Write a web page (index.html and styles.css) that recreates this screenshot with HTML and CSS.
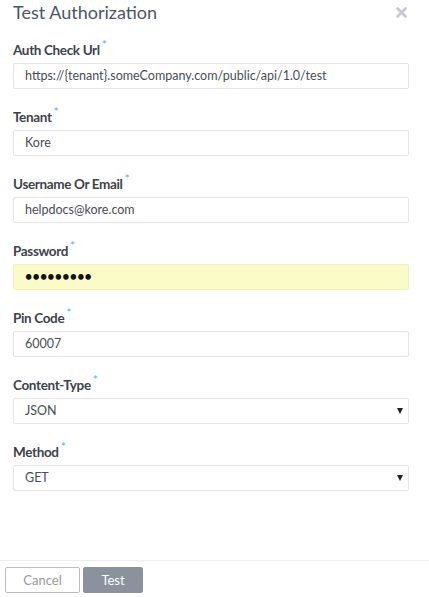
FILE: index.html
```html
<!DOCTYPE html>
<html>
<head>
<meta charset="utf-8">
<link rel="stylesheet" href="styles.css">
</head>
<body>
<div class="dialog">
  <div class="header">
    <h1 class="title">Test Authorization</h1>
    <svg class="close" width="11" height="11" viewBox="0 0 11 11"><path d="M1.5 1.5 L9.5 9.5 M9.5 1.5 L1.5 9.5" stroke="#c8c8d4" stroke-width="2.8" stroke-linecap="round"/></svg>
  </div>
  <div class="form">
    <div class="field">
      <div class="label">Auth Check Url<span class="req">*</span></div>
      <div class="control">https://{tenant}.someCompany.com/public/api/1.0/test</div>
    </div>
    <div class="field">
      <div class="label">Tenant<span class="req">*</span></div>
      <div class="control">Kore</div>
    </div>
    <div class="field">
      <div class="label">Username Or Email<span class="req">*</span></div>
      <div class="control">helpdocs@kore.com</div>
    </div>
    <div class="field">
      <div class="label">Password<span class="req">*</span></div>
      <div class="control autofill"><span class="dots">•••••••••</span></div>
    </div>
    <div class="field">
      <div class="label">Pin Code<span class="req">*</span></div>
      <div class="control">60007</div>
    </div>
    <div class="field">
      <div class="label">Content-Type<span class="req">*</span></div>
      <div class="control select">JSON<span class="caret"></span></div>
    </div>
    <div class="field">
      <div class="label">Method<span class="req">*</span></div>
      <div class="control select">GET<span class="caret"></span></div>
    </div>
  </div>
  <div class="footer">
    <button class="btn btn-cancel">Cancel</button>
    <button class="btn btn-test">Test</button>
  </div>
</div>
</body>
</html>
```
FILE: styles.css
```css
html, body {
  margin: 0;
  padding: 0;
  background: #ffffff;
}
body {
  font-family: Lato, "Open Sans", "Liberation Sans", sans-serif;
  width: 429px;
  height: 597px;
  overflow: hidden;
}
.dialog {
  display: flex;
  flex-direction: column;
  height: 597px;
}
.header {
  display: flex;
  justify-content: space-between;
  align-items: flex-start;
  padding: 0 22px 0 13px;
  height: 24px;
}
.title {
  margin: 0;
  font-size: 18px;
  line-height: 24px;
  font-weight: 400;
  color: #4b5664;
}
.close {
  margin-top: 7px;
}
.form {
  padding: 18px 20px 0 13px;
  flex: 1;
}
.field {
  margin-bottom: 20px;
}
.label {
  font-size: 13.5px;
  line-height: 16px;
  height: 16px;
  font-weight: 700;
  color: #3d424a;
  margin-bottom: 5px;
  letter-spacing: -0.35px;
}
.req {
  position: relative;
  top: -6px;
  color: #3cbfcf;
  font-size: 12px;
  margin-left: 2px;
  font-weight: 400;
}
.control {
  box-sizing: border-box;
  height: 26px;
  border: 1px solid #e4e4e4;
  border-radius: 2px;
  padding: 0 11px;
  font-size: 12.5px;
  line-height: 24px;
  color: #474d55;
  display: flex;
  align-items: center;
}
.autofill {
  background: #fafbc7;
  border-color: #f0f0c8;
}
.dots {
  font-size: 12.5px;
  font-weight: 700;
  letter-spacing: 0.2px;
  color: #111;
}
.select {
  justify-content: space-between;
}
.caret {
  width: 0;
  height: 0;
  border-left: 3px solid transparent;
  border-right: 3px solid transparent;
  border-top: 6px solid #222;
  margin-right: -6px;
}
.footer {
  border-top: 1px solid #eeeeee;
  height: 37px;
  padding: 6px 5px 0;
  box-sizing: border-box;
  display: flex;
  gap: 3px;
}
.btn {
  box-sizing: border-box;
  height: 26px;
  font-family: Lato, "Open Sans", "Liberation Sans", sans-serif;
  font-size: 13px;
  border-radius: 2px;
  padding: 0;
  cursor: pointer;
}
.btn-cancel {
  width: 75px;
  background: #fff;
  border: 1px solid #bdbdbd;
  color: #9a9a9a;
}
.btn-test {
  width: 60px;
  background: #8a939d;
  border: 1px solid #8a939d;
  color: #ffffff;
}
```
